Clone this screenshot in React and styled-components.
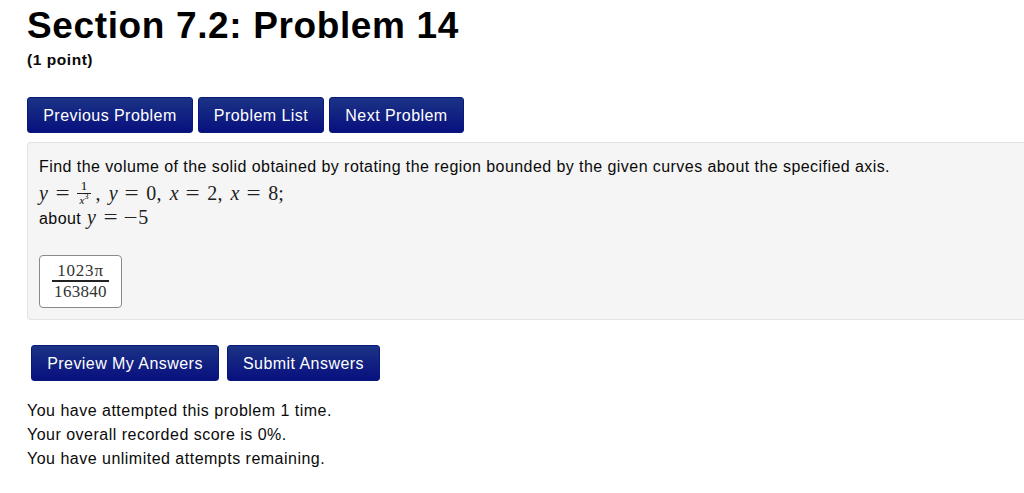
import styled, { createGlobalStyle } from "styled-components";

const GlobalStyle = createGlobalStyle`
  html, body {
    margin: 0;
    padding: 0;
    background: #fff;
    overflow: hidden;
  }
  body {
    font-family: "Liberation Sans", Arial, sans-serif;
    color: #0a0a0a;
  }
`;

const Page = styled.div`
  width: 1024px;
  height: 493px;
  box-sizing: border-box;
  padding: 0 0 0 27px;
  overflow: hidden;
`;

const Title = styled.h1`
  margin: 0;
  padding-top: 4px;
  font-size: 37px;
  line-height: 44px;
  font-weight: 700;
  letter-spacing: 0.63px;
  color: #000;
`;

const Points = styled.div`
  margin-top: 2px;
  font-size: 15.5px;
  line-height: 20px;
  font-weight: 700;
  letter-spacing: 0.55px;
`;

const ButtonRow = styled.div`
  display: flex;
  gap: ${(p) => p.$gap}px;
  margin: ${(p) => p.$top}px 0 0 ${(p) => p.$left || 0}px;
`;

const Button = styled.button`
  box-sizing: border-box;
  width: ${(p) => p.$width}px;
  height: 36px;
  padding: 1px 0 0;
  border: 1px solid #0a1a7a;
  border-radius: 3px;
  background: linear-gradient(to bottom, #1b3385, #08107f);
  color: #fff;
  font-family: inherit;
  font-size: 16px;
  letter-spacing: 0.45px;
  text-align: center;
`;

const ProblemPanel = styled.div`
  box-sizing: border-box;
  width: 1010px;
  height: 178px;
  margin-top: 9px;
  padding: 12px 11px;
  background: #f5f5f5;
  border: 1px solid #e3e3e3;
  border-right: 0;
  border-radius: 4px 0 0 4px;
  font-size: 16px;
  line-height: 24px;
  letter-spacing: 0.435px;
`;

const Math = styled.span`
  font-family: "Liberation Serif", "DejaVu Serif", serif;
  font-size: 20px;
  line-height: 1;
  letter-spacing: 0.2px;
  color: #222;
  white-space: pre;
`;

const Var = styled.i`
  font-style: italic;
`;

const Eq = styled.span`
  display: inline-block;
  margin: 0 8.5px;
  transform: scaleX(1.25);
`;

const Minus = styled.span`
  display: inline-block;
  margin: 0 2px 0 0;
  transform: scaleX(1.25);
`;

const Comma = styled.span`
  margin-right: 8px;
`;

const Fraction = styled.span`
  display: inline-flex;
  flex-direction: column;
  align-items: center;
  vertical-align: middle;
  margin: ${(p) => p.$margin || "0"};
  font-family: "Liberation Serif", "DejaVu Serif", serif;
  line-height: 1;
`;

const Num = styled.span`
  font-size: ${(p) => p.$size}px;
  line-height: ${(p) => p.$line}px;
  padding: 0 ${(p) => p.$pad || 0}px;
  letter-spacing: ${(p) => p.$spacing || 0}px;
`;

const Den = styled(Num)`
  border-top: ${(p) => p.$rule}px solid #222;
`;

const Exponent = styled.sup`
  font-size: 8px;
  line-height: 0;
`;

const MathLine = styled.div`
  height: 24px;
  margin: 2px 0;
  display: flex;
  align-items: center;
`;

const AboutLine = styled.div`
  word-spacing: 1px;
`;

const AnswerBox = styled.div`
  box-sizing: border-box;
  width: 83px;
  height: 53px;
  margin-top: 24px;
  display: flex;
  align-items: center;
  justify-content: center;
  background: #fff;
  border: 1px solid #8a8a8a;
  border-radius: 4px;
  color: #333;
`;

const Status = styled.div`
  margin-top: 18px;
  font-size: 16px;
  line-height: 24px;
  letter-spacing: 0.49px;
`;

export default function App() {
  return (
    <Page>
      <GlobalStyle />
      <Title>Section 7.2: Problem 14</Title>
      <Points>(1 point)</Points>
      <ButtonRow $gap={5} $top={27}>
        <Button $width={166}>Previous Problem</Button>
        <Button $width={126}>Problem List</Button>
        <Button $width={135}>Next Problem</Button>
      </ButtonRow>
      <ProblemPanel>
        <div>Find the volume of the solid obtained by rotating the region bounded by the given curves about the specified axis.</div>
        <MathLine>
          <Math>
            <Var>y</Var>
            <Eq>=</Eq>
          </Math>
          <Fraction $margin="0 4px 0 0">
            <Num $size={13} $line={14}>1</Num>
            <Den $size={11} $line={13} $rule={1} $pad={3}>
              <Var>x</Var>
              <Exponent>3</Exponent>
            </Den>
          </Fraction>
          <Math>
            <Comma>,</Comma>
            <Var>y</Var>
            <Eq>=</Eq>0<Comma>,</Comma>
            <Var>x</Var>
            <Eq>=</Eq>2<Comma>,</Comma>
            <Var>x</Var>
            <Eq>=</Eq>8;
          </Math>
        </MathLine>
        <AboutLine>
          about{" "}
          <Math>
            <Var>y</Var>
            <Eq>=</Eq>
            <Minus>−</Minus>5
          </Math>
        </AboutLine>
        <AnswerBox>
          <Fraction>
            <Num $size={17} $line={18} $spacing={0.8}>1023π</Num>
            <Den $size={17} $line={20} $rule={2} $pad={2} $spacing={0.3}>163840</Den>
          </Fraction>
        </AnswerBox>
      </ProblemPanel>
      <ButtonRow $gap={8} $top={25} $left={4}>
        <Button $width={188}>Preview My Answers</Button>
        <Button $width={153}>Submit Answers</Button>
      </ButtonRow>
      <Status>
        <div>You have attempted this problem 1 time.</div>
        <div>Your overall recorded score is 0%.</div>
        <div>You have unlimited attempts remaining.</div>
      </Status>
    </Page>
  );
}
